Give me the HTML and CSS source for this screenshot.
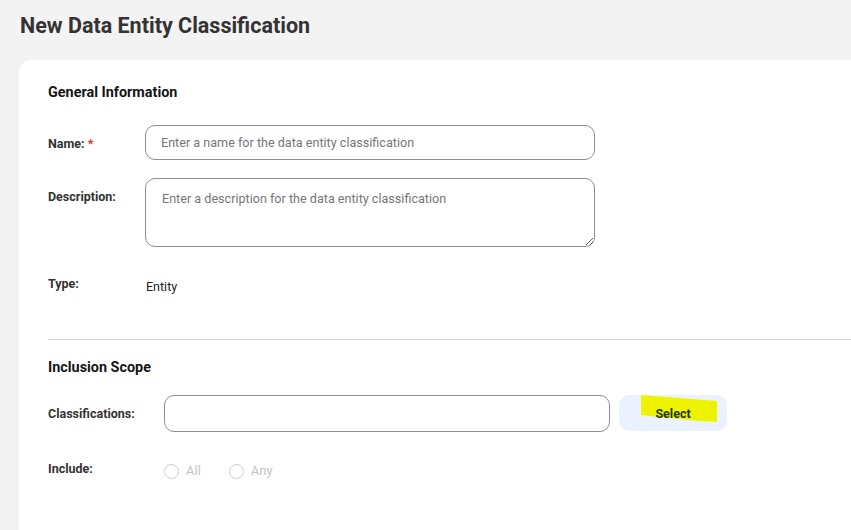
FILE: index.html
```html
<!DOCTYPE html>
<html lang="en">
<head>
<meta charset="utf-8">
<title>New Data Entity Classification</title>
<link rel="stylesheet" href="styles.css">
</head>
<body>
<h1 class="page-title">New Data Entity Classification</h1>
<main class="card">
  <section class="section section-general">
    <h2 class="section-title">General Information</h2>
    <div class="form-grid grid-general">
      <label class="field-label" for="name">Name: <span class="req">*</span></label>
      <input class="text-input input-name" id="name" type="text" placeholder="Enter a name for the data entity classification">

      <label class="field-label" for="desc">Description:</label>
      <textarea class="text-area" id="desc" placeholder="Enter a description for the data entity classification"></textarea>

      <div class="field-label">Type:</div>
      <div class="field-value">Entity</div>
    </div>
  </section>
  <hr class="divider">
  <section class="section section-scope">
    <h2 class="section-title">Inclusion Scope</h2>
    <div class="form-grid grid-scope">
      <label class="field-label" for="cls">Classifications:</label>
      <div class="picker">
        <input class="text-input input-cls" id="cls" type="text">
        <button class="select-btn" type="button">
          <svg class="highlight" width="80" height="30" viewBox="0 0 80 30" aria-hidden="true">
            <polygon points="2,0 78,6 78,27 60,26 50,25 2,20" fill="#eef400"/>
          </svg>
          <span class="select-text">Select</span>
        </button>
      </div>

      <div class="field-label">Include:</div>
      <div class="radio-row">
        <label class="radio"><span class="radio-dot"></span>All</label>
        <label class="radio"><span class="radio-dot"></span>Any</label>
      </div>
    </div>
  </section>
</main>
</body>
</html>
```

FILE: styles.css
```css
html, body {
  margin: 0;
  padding: 0;
}
body {
  background: #f3f3f3;
  font-family: Roboto, "Liberation Sans", Arial, sans-serif;
  color: #333;
  height: 530px;
  overflow: hidden;
}
.page-title {
  margin: 0;
  padding: 14px 20px 0;
  font-size: 21.5px;
  line-height: 24px;
  font-weight: 700;
  color: #333;
}
.card {
  margin: 22px 0 0 19px;
  background: #fff;
  border-radius: 12px 0 0 0;
  min-height: 480px;
  padding: 25px 0 0 29px;
  box-sizing: border-box;
}
.section-title {
  margin: 0;
  font-size: 14.4px;
  line-height: 16px;
  font-weight: 700;
  color: #151515;
}
.form-grid {
  display: grid;
  row-gap: 18px;
  align-items: start;
}
.grid-general {
  grid-template-columns: 97px 450px;
  margin-top: 24px;
}
.grid-scope {
  grid-template-columns: 116px auto;
  margin-top: 19px;
}
.field-label {
  font-size: 12.5px;
  line-height: 16px;
  font-weight: 700;
  color: #333;
  padding-top: 10.5px;
}
.req {
  color: #e0312a;
}
.text-input, .text-area {
  box-sizing: border-box;
  border: 1px solid #8e8e8e;
  border-radius: 10px;
  background: #fff;
  font-family: Roboto, "Liberation Sans", Arial, sans-serif;
  font-size: 12.6px;
  color: #333;
  padding: 0 15px;
  margin: 0;
  outline: none;
}
.text-input::placeholder, .text-area::placeholder {
  color: #777;
}
.input-name {
  width: 450px;
  height: 35px;
}
.text-area {
  width: 450px;
  height: 69px;
  padding: 12px 16px;
  resize: vertical;
  line-height: 16px;
  display: block;
}
.field-value {
  font-size: 12.5px;
  line-height: 16px;
  color: #222;
  padding-top: 14px;
  padding-left: 1px;
}
.divider {
  border: 0;
  border-top: 1px solid #d4d4d4;
  margin: 44px 0 20px;
  height: 0;
}
.picker {
  display: flex;
  gap: 9px;
  align-items: flex-start;
}
.input-cls {
  width: 446px;
  height: 37px;
}
.select-btn {
  position: relative;
  width: 108px;
  height: 36px;
  border: 0;
  border-radius: 10px;
  background: #ebf2fd;
  font-family: Roboto, "Liberation Sans", Arial, sans-serif;
  font-size: 12.5px;
  font-weight: 700;
  color: #1f3808;
  padding: 0;
  margin: 0;
  cursor: pointer;
}
.select-text {
  position: relative;
  z-index: 2;
}
.highlight {
  position: absolute;
  left: 20px;
  top: 0;
  z-index: 1;
  pointer-events: none;
}
.radio-row {
  display: flex;
  gap: 28px;
  padding-top: 13px;
}
.radio {
  display: flex;
  align-items: center;
  gap: 7px;
  font-size: 13px;
  line-height: 16px;
  color: #c4c4c4;
}
.radio-dot {
  width: 13px;
  height: 13px;
  border: 1px solid #cfcfcf;
  border-radius: 50%;
  box-sizing: content-box;
}
```
